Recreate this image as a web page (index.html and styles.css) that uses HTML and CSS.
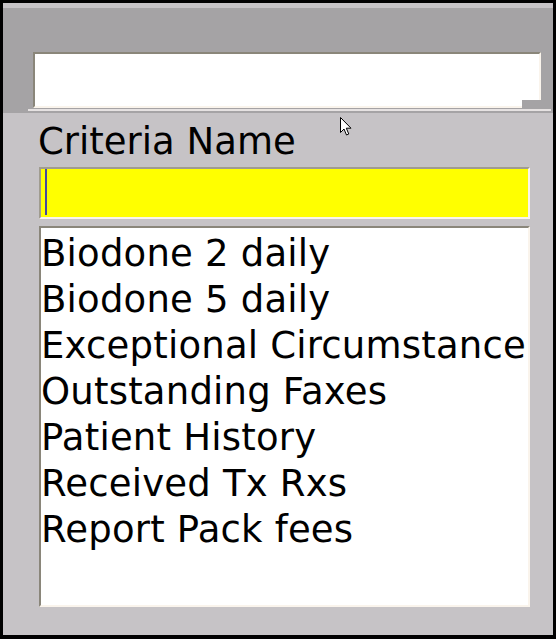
FILE: index.html
```html
<!DOCTYPE html>
<html>
<head>
<meta charset="utf-8">
<link rel="stylesheet" href="styles.css">
</head>
<body>
<div class="window">
  <div class="top">
    <div class="strip"></div>
    <div class="search"></div>
    <div class="hl"></div>
  </div>
  <div class="panel">
    <div class="label">Criteria Name</div>
    <div class="field"><div class="caret"></div></div>
    <div class="list">
      <div class="item">Biodone 2 daily</div>
      <div class="item">Biodone 5 daily</div>
      <div class="item">Exceptional Circumstance</div>
      <div class="item">Outstanding Faxes</div>
      <div class="item">Patient History</div>
      <div class="item">Received Tx Rxs</div>
      <div class="item">Report Pack fees</div>
    </div>
  </div>
  <svg class="pointer" width="14" height="20" viewBox="0 0 14 20">
    <path d="M0.5 0.5 L0.5 15.5 L4 12 L6.5 18 L8.8 17 L6.3 11.2 L11 11.2 Z" fill="#ffffff" stroke="#000000" stroke-width="1"/>
  </svg>
</div>
</body>
</html>
```

FILE: styles.css
```css
html, body {
  margin: 0;
  padding: 0;
  background: #000000;
}

.window {
  position: relative;
  width: 550px;
  height: 632px;
  padding: 3px 3px 4px 3px;
  background: #000000;
  font-family: "DejaVu Sans", sans-serif;
  color: #000000;
}

.top {
  height: 110px;
  background: #a5a3a5;
  display: flex;
  flex-direction: column;
}

.strip {
  height: 5px;
  background: #c6c3c6;
}

.search {
  position: relative;
  margin: 44px 0 0 30px;
  width: 504px;
  height: 52px;
  background: #ffffff;
  border-top: 2px solid #8a867a;
  border-left: 2px solid #8a867a;
  border-bottom: 2px solid #faf4ec;
  border-right: 2px solid #faf4ec;
}

.search::after {
  content: "";
  position: absolute;
  right: -4px;
  bottom: -2px;
  width: 21px;
  height: 8px;
  background: #a5a3a5;
}

.hl {
  margin: 1px 2px 0 25px;
  height: 2px;
  background: #e6e2e2;
}

.panel {
  height: 522px;
  background: #c6c3c6;
  display: flex;
  flex-direction: column;
}

.label {
  margin: 7px 0 0 35px;
  font-size: 37px;
  line-height: 44px;
  height: 44px;
}

.field {
  margin: 3px 0 0 36px;
  width: 483px;
  height: 48px;
  background: #ffff00;
  border-top: 2px solid #a09c90;
  border-left: 2px solid #a09c90;
  border-bottom: 2px solid #faf4ec;
  border-right: 2px solid #faf4ec;
  padding-left: 4px;
  display: flex;
  align-items: flex-start;
}

.caret {
  width: 2px;
  height: 46px;
  background: #4848a0;
}

.list {
  margin: 7px 0 0 36px;
  width: 487px;
  height: 374px;
  padding-top: 3px;
  background: #ffffff;
  border-top: 2px solid #8a867a;
  border-left: 2px solid #8a867a;
  border-bottom: 2px solid #faf4ec;
  border-right: 2px solid #faf4ec;
}

.item {
  font-size: 37px;
  line-height: 46px;
  height: 46px;
  letter-spacing: 0.2px;
  white-space: nowrap;
}

.pointer {
  position: absolute;
  left: 340px;
  top: 117px;
}
```
